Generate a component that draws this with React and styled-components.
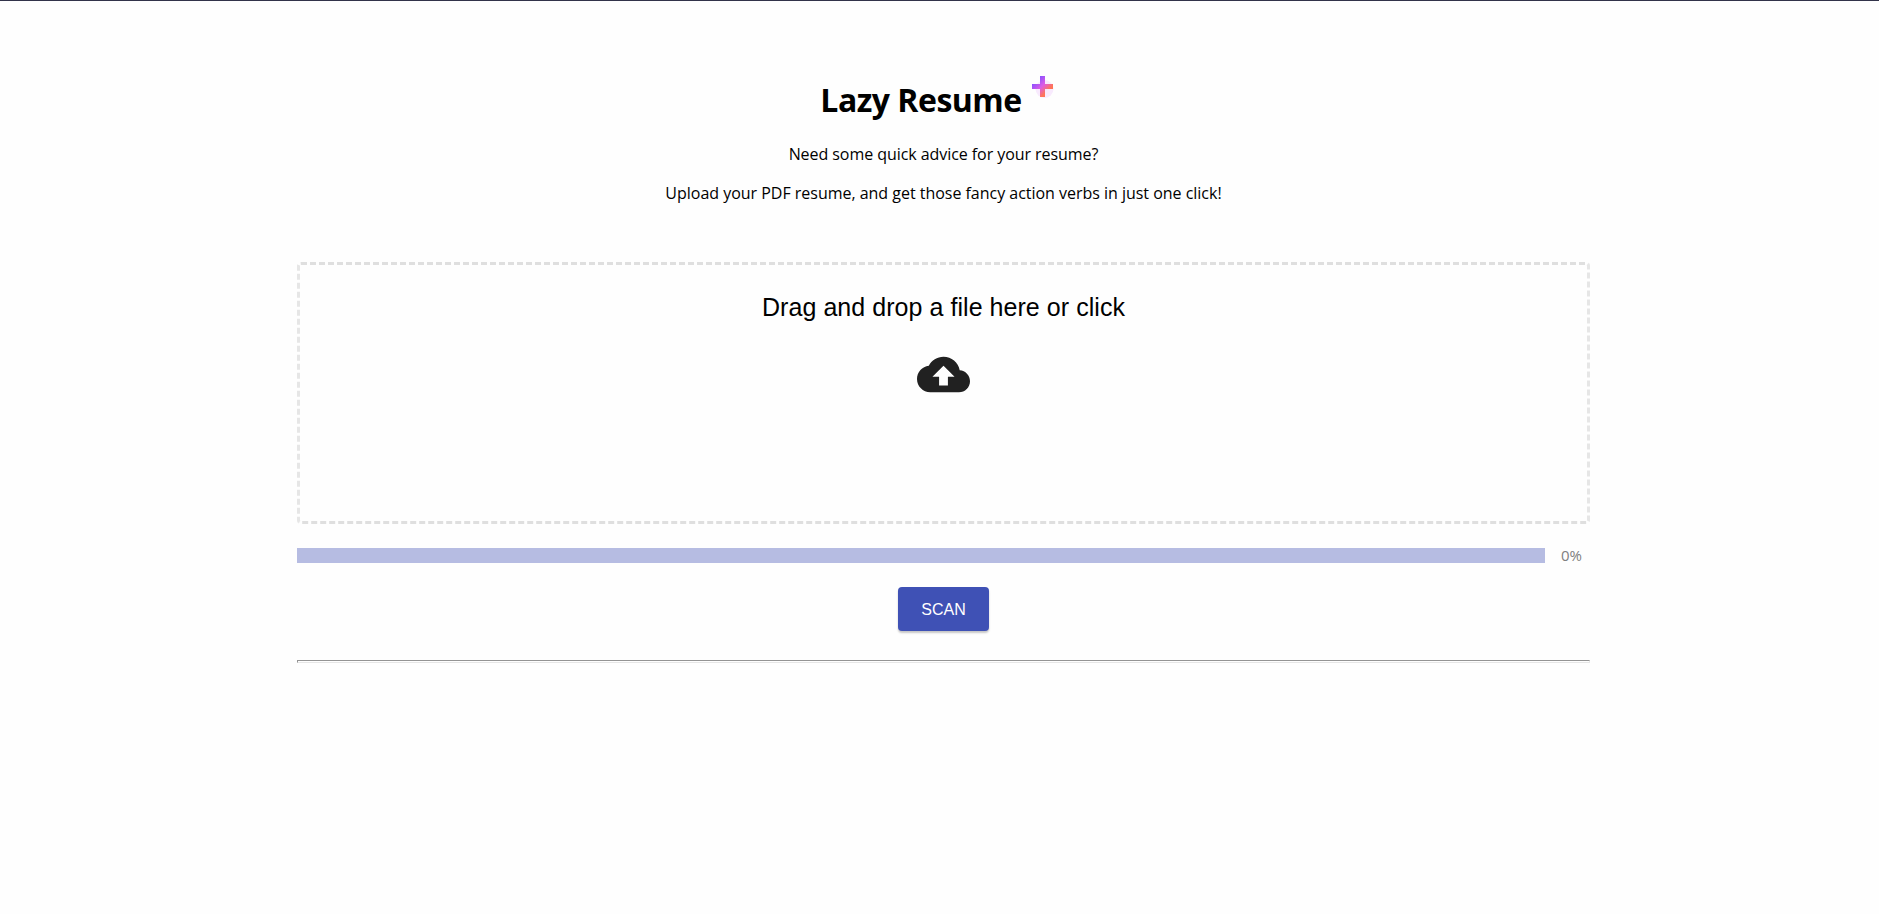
import React from "react";
import styled, { createGlobalStyle } from "styled-components";

//////////
// STYLE
//////////

const GlobalStyle = createGlobalStyle`
  body {
    margin: 0;
    background: #fefefe;
    color: #000;
    font-family: "Segoe UI", "Open Sans", "Noto Sans", sans-serif;
  }
`;

const Page = styled.div`
  box-sizing: border-box;
  min-height: 914px;
  border-top: 1px solid #32334a;
  padding: 71px 289px 0 297px;
`;

const Header = styled.header`
  display: flex;
  flex-direction: column;
  align-items: center;
  height: 190px;
`;

const TitleRow = styled.div`
  display: flex;
  align-items: flex-start;
  height: 71px;
  padding-right: 13px;
`;

const Title = styled.h1`
  margin: 6px 0 0;
  font-size: 32px;
  line-height: 44px;
  font-weight: 700;
  letter-spacing: -0.5px;
  white-space: nowrap;
`;

const Plus = styled.svg`
  width: 22px;
  height: 22px;
  margin: 4px 0 0 10px;
`;

const Text = styled.p`
  margin: 0 0 17px;
  font-size: 16px;
  line-height: 22px;
  letter-spacing: ${({ $spacing }) => $spacing};
  white-space: nowrap;
`;

const DropZone = styled.div`
  box-sizing: border-box;
  display: flex;
  flex-direction: column;
  align-items: center;
  height: 262px;
  padding-top: 26px;
  border: 3px dashed;
  border-color: #dfdfdf #e6e6e6;
  border-radius: 4px;
`;

const DropText = styled.p`
  margin: 0;
  font-family: "Liberation Sans", Arial, sans-serif;
  font-size: 25px;
  line-height: 32px;
  letter-spacing: 0.05px;
`;

const CloudIcon = styled.svg`
  width: 53px;
  height: 53px;
  margin-top: 25px;
  fill: #212121;
`;

const ProgressRow = styled.div`
  display: flex;
  align-items: center;
  height: 15px;
  margin-top: 24px;
`;

const ProgressTrack = styled.div`
  width: 1248px;
  height: 15px;
  background: #b6bce2;
`;

const ProgressLabel = styled.span`
  margin: 0 0 2px 16px;
  color: #808080;
  font-size: 15px;
  line-height: 20px;
`;

const ScanButton = styled.button`
  display: block;
  width: 91px;
  height: 44px;
  margin: 24px auto 0;
  padding: 1px 0 0;
  border: 0;
  border-radius: 4px;
  background: #3f51b5;
  box-shadow: 0 2px 2px rgba(0, 0, 0, 0.22);
  color: #fff;
  font-family: "Liberation Sans", Arial, sans-serif;
  font-size: 16px;
`;

const Divider = styled.hr`
  height: 1px;
  margin: 29px 0 0;
  border: 1px solid;
  border-color: #949494 #e6e6e6 #e6e6e6 #949494;
`;

//////////
// REACT
//////////

const App = () => {
  return (
    <Page>
      <GlobalStyle />
      <Header>
        <TitleRow>
          <Title>Lazy Resume</Title>
          <Plus viewBox="0 0 22 22">
            <defs>
              <linearGradient id="plus" x1="0" y1="0" x2="1" y2="1">
                <stop offset="0.2" stopColor="#8c52ff" />
                <stop offset="0.48" stopColor="#dc5be6" />
                <stop offset="0.72" stopColor="#ff7558" />
              </linearGradient>
            </defs>
            <circle cx="12.5" cy="13" r="9" fill="#f8eafd" />
            <path d="M8 0h5v8h8v5h-8v8H8v-8H0V8h8z" fill="url(#plus)" />
          </Plus>
        </TitleRow>
        <Text $spacing="-0.06px">Need some quick advice for your resume?</Text>
        <Text $spacing="-0.02px">
          Upload your PDF resume, and get those fancy action verbs in just one
          click!
        </Text>
      </Header>
      <DropZone>
        <DropText>Drag and drop a file here or click</DropText>
        <CloudIcon viewBox="0 0 24 24">
          <path d="M19.35 10.04C18.67 6.59 15.64 4 12 4 9.11 4 6.6 5.64 5.35 8.04 2.34 8.36 0 10.91 0 14c0 3.31 2.69 6 6 6h13c2.76 0 5-2.24 5-5 0-2.64-2.05-4.78-4.65-4.96zM14 13v4h-4v-4H7l5-5 5 5h-3z" />
        </CloudIcon>
      </DropZone>
      <ProgressRow>
        <ProgressTrack />
        <ProgressLabel>0%</ProgressLabel>
      </ProgressRow>
      <ScanButton>SCAN</ScanButton>
      <Divider />
    </Page>
  );
};

export default App;
